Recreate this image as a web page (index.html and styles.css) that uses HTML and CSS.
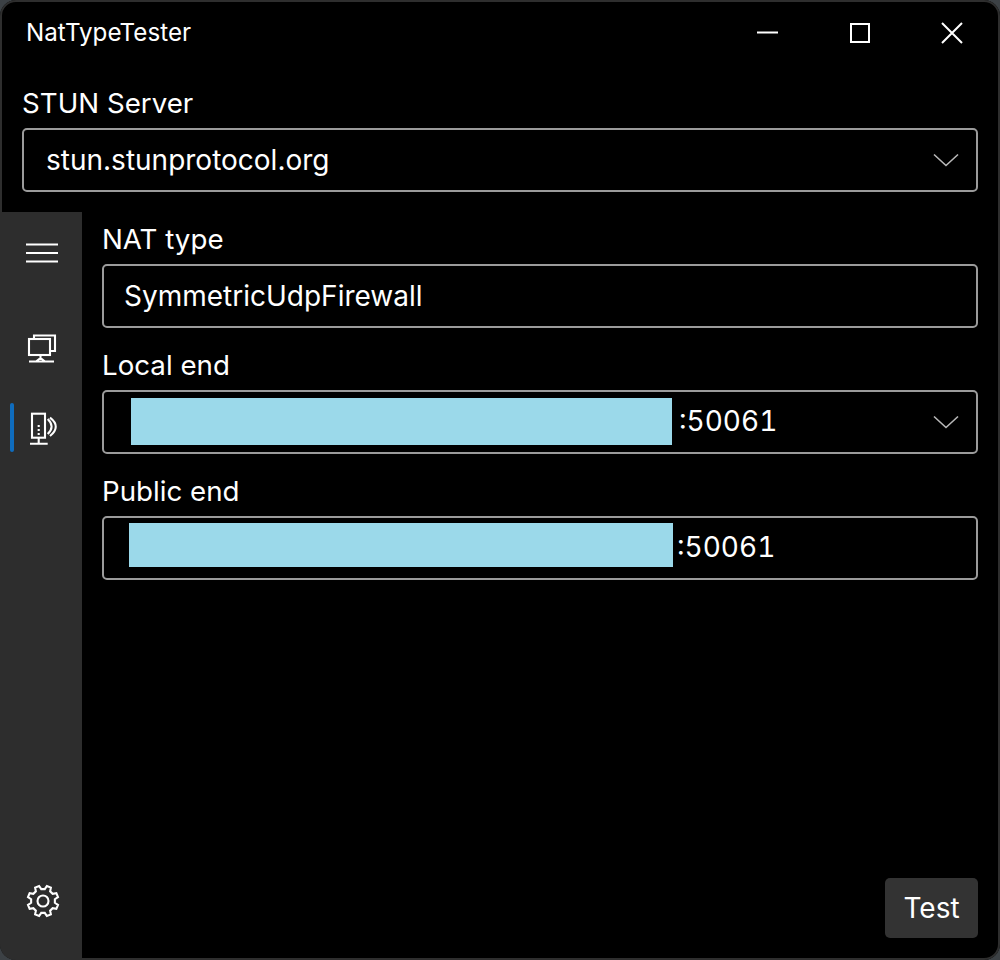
FILE: index.html
```html
<!DOCTYPE html>
<html lang="en">
<head>
<meta charset="utf-8">
<title>NatTypeTester</title>
<link rel="stylesheet" href="styles.css">
</head>
<body>
<div class="window">
  <header class="titlebar">
    <span class="app-title">NatTypeTester</span>
    <div class="caption">
      <svg class="cap-icon cap-min" width="22" height="22" viewBox="0 0 22 22"><path d="M0 10.500H21" /></svg>
      <svg class="cap-icon cap-max" width="22" height="22" viewBox="0 0 22 22"><rect x="2" y="2" width="18" height="18" /></svg>
      <svg class="cap-icon cap-close" width="22" height="22" viewBox="0 0 22 22"><path d="M1 1L21 21M21 1L1 21" /></svg>
    </div>
  </header>
  <section class="server">
    <label class="field-label">STUN Server</label>
    <div class="box">
      <span class="value server-value">stun.stunprotocol.org</span>
      <svg class="chevron" width="26" height="14" viewBox="0 0 26 14"><path d="M1 1.500L13 12.500L25 1.500" /></svg>
    </div>
  </section>
  <div class="main">
    <nav class="nav">
      <div class="nav-top">
        <svg class="nav-icon menu" width="34" height="20" viewBox="0 0 34 20"><path d="M1 1.500H33M1 10H33M1 18.500H33" /></svg>
        <svg class="nav-icon net" width="30" height="32" viewBox="0 0 30 32"><path d="M7 6V2.500H28V18H23" /><rect x="2" y="6" width="21" height="16" /><path d="M13.500 22V25M9 28.500L13.500 25L18 28.500M2 28.500H27" /></svg>
        <div class="nav-active">
          <span class="indicator"></span>
          <svg class="nav-icon radio" width="28" height="34" viewBox="0 0 28 34"><rect x="3" y="2.700" width="13" height="24" /><path d="M9.700 26.700V32.700M1 32.700H18.700" /><path d="M9.700 14V16M9.700 18V20M9.700 22V24" /><path d="M18.700 8Q26.500 15.500 18.700 23M21 6.700Q32.500 15.500 21 25" /></svg>
        </div>
      </div>
      <svg class="nav-icon gear" width="34" height="34" viewBox="0 0 34 34"><path d="M18.770 5.130L20.880 2L24.870 3.640L24.140 7.350L26.650 9.860L30.360 9.130L32 13.120L28.870 15.230L28.870 18.770L32 20.880L30.360 24.870L26.650 24.140L24.140 26.650L24.870 30.360L20.880 32L18.770 28.870L15.230 28.870L13.120 32L9.130 30.360L9.860 26.650L7.350 24.140L3.640 24.870L2 20.880L5.130 18.770L5.130 15.230L2 13.120L3.640 9.130L7.350 9.860L9.860 7.350L9.130 3.640L13.120 2L15.230 5.130Z" /><circle cx="17" cy="17" r="5.500" /></svg>
    </nav>
    <main class="content">
      <label class="field-label">NAT type</label>
      <div class="box inner"><span class="value">SymmetricUdpFirewall</span></div>
      <label class="field-label spaced">Local end</label>
      <div class="box inner">
        <span class="mask mask-local"></span><span class="value port port-local">:50061</span>
        <svg class="chevron" width="26" height="14" viewBox="0 0 26 14"><path d="M1 1.500L13 12.500L25 1.500" /></svg>
      </div>
      <label class="field-label spaced">Public end</label>
      <div class="box inner">
        <span class="mask mask-public"></span><span class="value port port-public">:50061</span>
      </div>
      <div class="actions"><button class="test-btn">Test</button></div>
    </main>
  </div>
</div>
</body>
</html>
```
FILE: styles.css
```css
* { box-sizing: border-box; }
html, body { margin: 0; padding: 0; background: #3c4145; }
body { width: 1000px; height: 960px; overflow: hidden; font-family: Inter, "Noto Sans", sans-serif; color: #fff; }
.window {
  width: 1000px; height: 960px; background: #000;
  border-radius: 16px; overflow: hidden;
  display: flex; flex-direction: column;
  box-shadow: inset 0 0 0 2px #2e2e2e;
}
.titlebar { height: 66px; flex: none; display: flex; align-items: center; justify-content: space-between; padding: 0 37px 0 26px; }
.app-title { font-size: 24.2px; line-height: 30px; }
.caption { display: flex; gap: 70px; align-items: center; }
.cap-icon { fill: none; stroke: #fff; stroke-width: 2; display: block; }
.server { padding: 18px 22px 0 22px; flex: none; height: 146px; }
.field-label { display: block; font-size: 27.7px; line-height: 38px; height: 44px; white-space: nowrap; }
.box {
  height: 64px; border: 2px solid #9b9b9b; border-radius: 5px;
  display: flex; align-items: center; padding-left: 22px; padding-right: 17px;
}
.inner { padding-left: 20px; }
.value { font-size: 28px; line-height: 36px; }
.chevron { margin-left: auto; fill: none; stroke: #b8b8b8; stroke-width: 1.6; }
.main { flex: 1; display: flex; min-height: 0; }
.nav { width: 82px; flex: none; background: #2d2d2d; display: flex; flex-direction: column; justify-content: space-between; align-items: center; padding: 31px 0 42px; }
.nav-top { display: flex; flex-direction: column; align-items: center; width: 100%; }
.nav-icon { fill: none; stroke: #fff; stroke-width: 2.1; display: block; }
.menu { margin-left: 2px; stroke-width: 1.9; }
.net { margin-top: 70px; margin-left: 2px; }
.nav-active { margin-top: 38px; width: 100%; display: flex; align-items: center; justify-content: center; position: relative; height: 49px; }
.indicator { position: absolute; left: 10px; top: 0; width: 4px; height: 49px; border-radius: 2px; background: #0f6cbd; }
.radio { margin-left: 4px; }
.gear { margin-left: 3px; }
.content { flex: 1; padding: 8px 22px 22px 20px; display: flex; flex-direction: column; }
.spaced { margin-top: 18px; }
.mask { display: block; background: #9bd9ea; flex: none; }
.mask-local { width: 541px; height: 47px; margin-left: 7px; margin-bottom: 1px; }
.mask-public { width: 544px; height: 44px; margin-left: 5px; margin-bottom: 7px; }
.port { font-variant-numeric: tabular-nums; }
.port-local { margin-left: 7px; margin-bottom: 3px; }
.port-public { margin-left: 4px; margin-bottom: 3px; }
.actions { margin-top: auto; display: flex; justify-content: flex-end; }
.test-btn { width: 93px; height: 60px; border: 0; border-radius: 5px; background: #333; color: #fff; font: 28px Inter, sans-serif; padding: 0; }
```
